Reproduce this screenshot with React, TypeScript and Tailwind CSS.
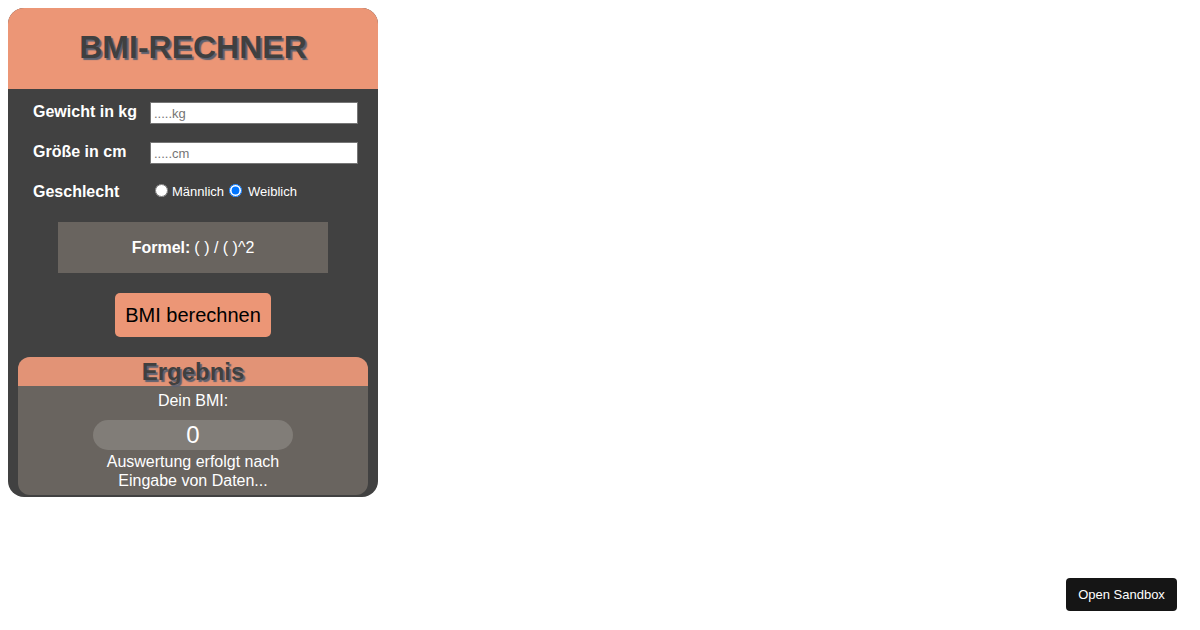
export default function App() {
  return (
    <div className="relative min-h-[630px] w-full bg-white font-['Liberation_Sans',Arial,sans-serif]">
      <div className="ml-2 pt-2">
        <div className="w-[370px] overflow-hidden rounded-[16px] bg-[#414141] pb-[2px]">
          {/* Header */}
          <div className="flex h-[81px] items-center justify-center bg-[#ec9676] pb-[4px]">
            <h1 className="text-[32px] font-bold leading-none text-[#404040] [text-shadow:2px_2px_1px_#5b6170]">
              BMI-RECHNER
            </h1>
          </div>

          {/* Form */}
          <div className="flex flex-col pt-[13px]">
            <div className="flex h-[22px] items-center pr-[20px]">
              <label className="w-[142px] pb-[2px] pl-[25px] text-[16px] font-bold text-white">Gewicht in kg</label>
              <input
                type="text"
                placeholder=".....kg"
                className="h-[22px] flex-1 border border-[#767676] bg-white px-[3px] text-[13px] text-black placeholder:text-[#757575]"
              />
            </div>
            <div className="mt-[18px] flex h-[22px] items-center pr-[20px]">
              <label className="w-[142px] pb-[2px] pl-[25px] text-[16px] font-bold text-white">Größe in cm</label>
              <input
                type="text"
                placeholder=".....cm"
                className="h-[22px] flex-1 border border-[#767676] bg-white px-[3px] text-[13px] text-black placeholder:text-[#757575]"
              />
            </div>
            <div className="mt-[17px] flex h-[22px] items-center">
              <label className="w-[142px] pl-[25px] text-[16px] font-bold text-white">Geschlecht</label>
              <div className="flex items-center text-[13px] text-white">
                <input type="radio" name="geschlecht" className="mb-[3px] ml-[5px] mr-[3px] h-[13px] w-[13px]" />
                <span className="ml-[1px]">Männlich</span>
                <input type="radio" name="geschlecht" defaultChecked className="mb-[3px] ml-[5px] mr-[3px] h-[13px] w-[13px]" />
                <span className="ml-[3px]">Weiblich</span>
              </div>
            </div>

            <div className="mx-auto mt-[19px] flex h-[51px] w-[270px] items-center justify-center bg-[#69645f] text-[16px] text-white">
              <span className="font-bold">Formel:</span>
              <span className="ml-[4px]">( ) / ( )^2</span>
            </div>

            <button className="mx-auto mt-[20px] h-[44px] rounded-[5px] bg-[#ec9676] px-[10px] text-[20px] text-black">
              BMI berechnen
            </button>

            {/* Ergebnis */}
            <div className="mx-[10px] mt-[20px] flex h-[138px] flex-col items-center overflow-hidden rounded-[12px] bg-[#69645f] text-white">
              <div className="flex h-[29px] w-full items-center justify-center bg-[#e29376]">
                <h2 className="text-[24px] font-bold leading-none text-[#404040] [text-shadow:2px_2px_1px_#5b6170]">
                  Ergebnis
                </h2>
              </div>
              <p className="mt-[6px] text-[16px] leading-[18px]">Dein BMI:</p>
              <div className="mt-[10px] flex h-[30px] w-[200px] items-center justify-center rounded-full bg-[#817d78] text-[24px]">
                0
              </div>
              <p className="mt-[2px] text-center text-[16px] leading-[19px]">
                Auswertung erfolgt nach
                <br />
                Eingabe von Daten...
              </p>
            </div>
          </div>
        </div>
      </div>

      <button className="absolute bottom-[19px] right-[23px] flex h-[33px] w-[111px] items-center justify-center rounded-[4px] bg-[#151515] text-[13px] text-white">
        Open Sandbox
      </button>
    </div>
  );
}
